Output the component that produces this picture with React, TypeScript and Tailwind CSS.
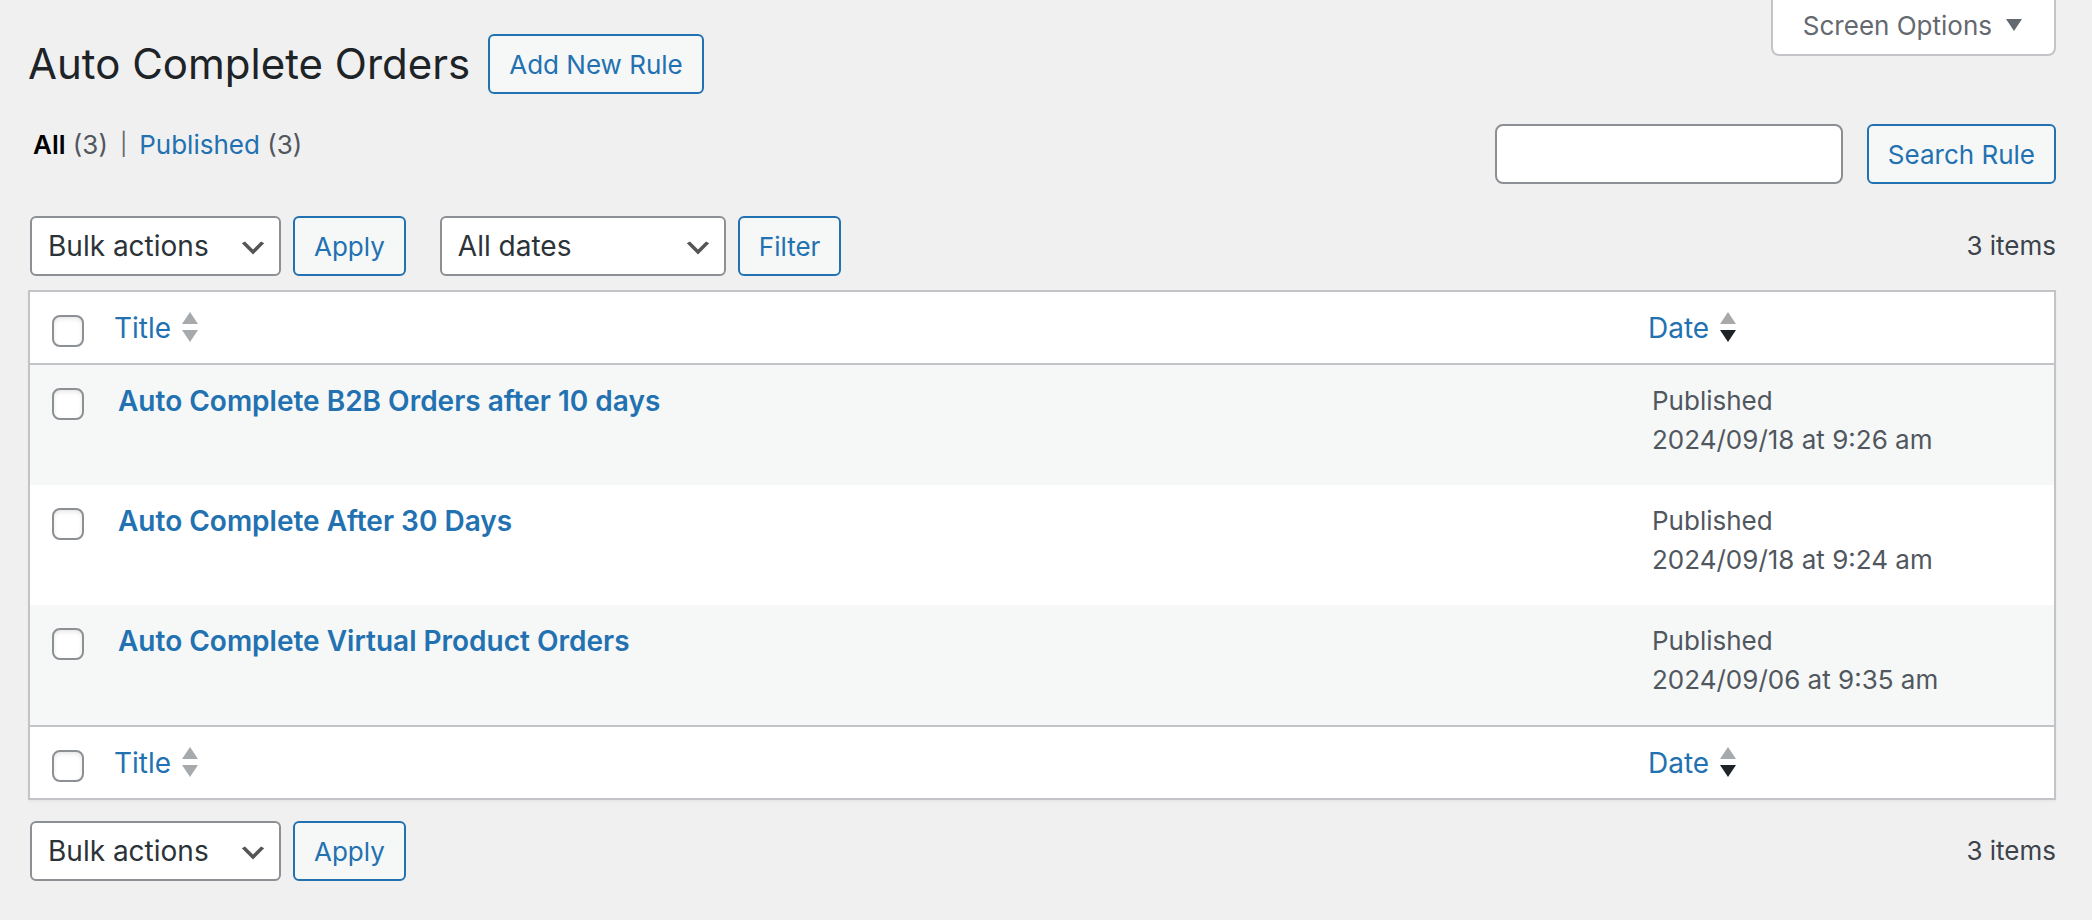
import React, { useState } from "react";

const rules = [
  { id: 1, title: "Auto Complete B2B Orders after 10 days", date: "2024/09/18 at 9:26 am" },
  { id: 2, title: "Auto Complete After 30 Days", date: "2024/09/18 at 9:24 am" },
  { id: 3, title: "Auto Complete Virtual Product Orders", date: "2024/09/06 at 9:35 am" },
];

const buttonClass =
  "h-[60px] px-[19px] shrink-0 rounded-md border-2 border-[#2271b1] bg-[#f6f7f7] text-[26px] text-[#2271b1] hover:bg-[#f0f0f1] cursor-pointer";

const checkboxClass =
  "block w-8 h-8 appearance-none rounded-lg border-2 border-[#8c8f94] bg-white shadow-[inset_0_2px_4px_rgba(0,0,0,0.1)] checked:bg-[#2271b1]";

function Select({ label, options, className }: { label: string; options: string[]; className: string }) {
  return (
    <div className={`relative ${className}`}>
      <select
        aria-label={label}
        className="w-full h-[60px] pl-4 pr-12 appearance-none rounded-md border-2 border-[#8c8f94] bg-white text-[28px] text-[#2c3338] cursor-pointer"
      >
        {options.map(option => (
          <option key={option}>{option}</option>
        ))}
      </select>
      <svg className="absolute right-3 top-4 pointer-events-none" width="32" height="32" viewBox="0 0 20 20">
        <path d="M5 6l5 5 5-5 2 1-7 7-7-7 2-1z" fill="#555" />
      </svg>
    </div>
  );
}

function SortLink({ label, sorted }: { label: string; sorted?: boolean }) {
  return (
    <a href="#" className="inline-flex items-center gap-[11px] text-[28px] leading-10 font-normal text-[#2271b1]">
      {label}
      <svg width="16" height="32" viewBox="0 0 16 32">
        <path d="M8 0l8 12H0z" fill="#a7aaad" />
        <path d="M0 18h16l-8 12z" fill={sorted ? "#1d2327" : "#a7aaad"} />
      </svg>
    </a>
  );
}

function HeadingRow({ edge, checked, onToggle }: { edge: string; checked: boolean; onToggle: () => void }) {
  return (
    <tr className="bg-white text-left align-top">
      <td className={`w-[68px] pt-[23px] pl-[22px] border-[#c3c4c7] ${edge}`}>
        <input type="checkbox" aria-label="Select All" className={checkboxClass} checked={checked} onChange={onToggle} />
      </td>
      <th scope="col" className={`pt-4 pb-[15px] pl-4 border-[#c3c4c7] ${edge}`}>
        <div className="flex">
          <SortLink label="Title" />
        </div>
      </th>
      <th scope="col" className={`w-[422px] pt-4 pb-[15px] pl-4 border-[#c3c4c7] ${edge}`}>
        <div className="flex">
          <SortLink label="Date" sorted />
        </div>
      </th>
    </tr>
  );
}

function BulkActions() {
  return (
    <div className="flex gap-3">
      <Select label="Select bulk action" options={["Bulk actions", "Edit", "Move to Trash"]} className="w-[251px]" />
      <button className={buttonClass}>Apply</button>
    </div>
  );
}

export default function App() {
  const [selected, setSelected] = useState<number[]>([]);
  const allSelected = selected.length === rules.length;

  const toggle = (id: number) =>
    setSelected(prev => (prev.includes(id) ? prev.filter(x => x !== id) : [...prev, id]));
  const toggleAll = () => setSelected(allSelected ? [] : rules.map(rule => rule.id));

  return (
    <div className="min-h-screen bg-[#f0f0f0] pl-7 pr-9 pb-9 font-['Inter',sans-serif] text-[26px] leading-[39px] text-[#3c434a]">
      <header className="flex items-start justify-between">
        <div className="flex items-center gap-[18px] pt-[34px]">
          <h1 className="text-[42px] leading-[60px] font-normal text-[#1d2327]">Auto Complete Orders</h1>
          <button className={buttonClass}>Add New Rule</button>
        </div>
        <button className="flex items-center gap-3.5 h-14 pl-[30px] pr-8 pb-1 rounded-b-lg border-2 border-t-0 border-[#c3c4c7] bg-white text-[#646970] cursor-pointer">
          Screen Options
          <svg width="16" height="12" viewBox="0 0 16 12">
            <path d="M0 0h16L8 12z" fill="#646970" />
          </svg>
        </button>
      </header>

      <div className="mt-[30px] flex items-start justify-between">
        <ul className="flex pl-[5px] leading-[41px] text-[#50575e]">
          <li>
            <a href="#" className="font-semibold text-black">All</a> (3)
          </li>
          <li className="px-3 text-[22px] text-[#646970]">|</li>
          <li>
            <a href="#" className="text-[#2271b1]">Published</a> (3)
          </li>
        </ul>
        <div className="flex gap-6">
          <input
            type="search"
            aria-label="Search Rule"
            className="w-[348px] h-[60px] px-4 rounded-lg border-2 border-[#8c8f94] bg-white"
          />
          <button className={buttonClass}>Search Rule</button>
        </div>
      </div>

      <div className="mt-8 flex items-center justify-between pl-0.5">
        <div className="flex gap-[34px]">
          <BulkActions />
          <div className="flex gap-3">
            <Select label="Filter by date" options={["All dates", "September 2024"]} className="w-[286px]" />
            <button className={buttonClass}>Filter</button>
          </div>
        </div>
        <span className="pb-0.5">3 items</span>
      </div>

      <table className="mt-3.5 w-full table-fixed border-separate border-spacing-0 border-2 border-[#c3c4c7] bg-white shadow-[0_2px_2px_rgba(0,0,0,0.04)]">
        <thead>
          <HeadingRow edge="border-b-2" checked={allSelected} onToggle={toggleAll} />
        </thead>
        <tbody>
          {rules.map(rule => (
            <tr key={rule.id} className="align-top odd:bg-[#f6f7f7]">
              <td className="pt-[23px] pl-[22px]">
                <input
                  type="checkbox"
                  aria-label={`Select ${rule.title}`}
                  className={checkboxClass}
                  checked={selected.includes(rule.id)}
                  onChange={() => toggle(rule.id)}
                />
              </td>
              <td className="pt-4 pl-5 text-[28px] leading-10">
                <a href="#" className="font-semibold text-[#2271b1]">{rule.title}</a>
              </td>
              <td className="pt-4 pb-[26px] pl-5 text-[#50575e]">
                Published
                <br />
                {rule.date}
              </td>
            </tr>
          ))}
        </tbody>
        <tfoot>
          <HeadingRow edge="border-t-2" checked={allSelected} onToggle={toggleAll} />
        </tfoot>
      </table>

      <div className="mt-[21px] flex items-center justify-between pl-0.5">
        <BulkActions />
        <span className="pb-0.5">3 items</span>
      </div>
    </div>
  );
}
